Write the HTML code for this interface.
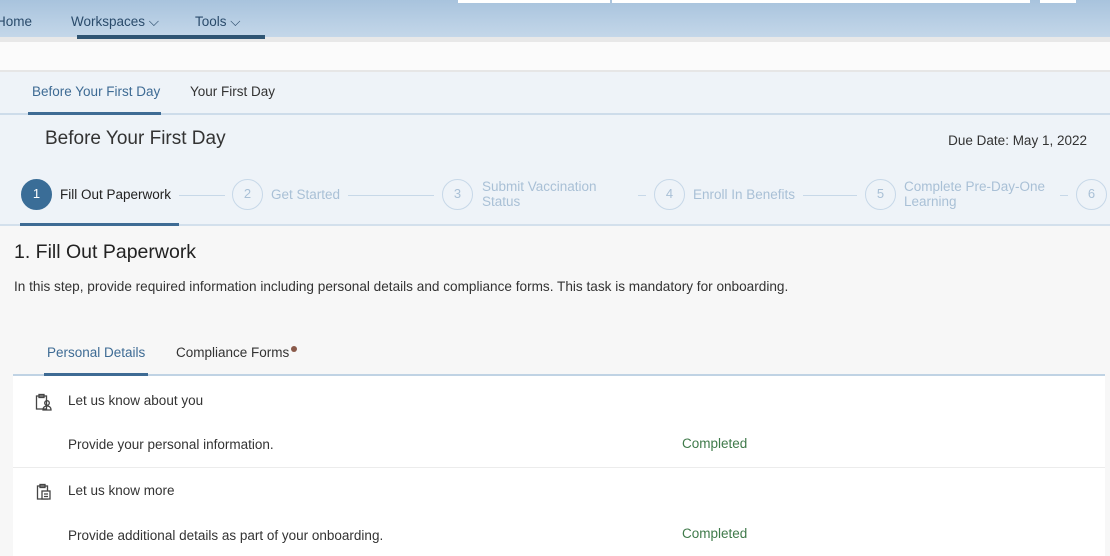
<!DOCTYPE html>
<html><head><style>
*{margin:0;padding:0;box-sizing:border-box}
body{width:1110px;height:550px;overflow:hidden;background:#f7f7f7;font-family:"Liberation Sans",sans-serif;position:relative;color:#333;font-size:13.5px}
.a{position:absolute;white-space:nowrap}
.hdr{left:0;top:0;width:1110px;height:37px;background:linear-gradient(#a8c3dd,#c4d7e9)}
.nav{top:14px;font-size:13.5px;color:#2a4b6b}
.circ{position:absolute;width:31px;height:31px;border-radius:50%;border:1.5px solid #c7d8e8;color:#a9c0d6;font-size:13px;text-align:center;line-height:28px;top:179px}
.lbl{font-size:13.5px;color:#a9c0d6}
.ln{position:absolute;height:1px;background:#c7d8e8;top:195px}
</style></head><body>
<div class="a hdr"></div>
<div class="a" style="left:458px;top:0;width:152px;height:3px;background:#fff"></div>
<div class="a" style="left:612px;top:0;width:418px;height:3px;background:#fff"></div>
<div class="a" style="left:1040px;top:0;width:36px;height:3px;background:#fff"></div>
<div class="a nav" style="left:-4px">Home</div>
<div class="a nav" style="left:71px">Workspaces ⌵</div>
<div class="a nav" style="left:195px">Tools ⌵</div>
<div class="a" style="left:0;top:37px;width:1110px;height:5px;background:#e8e8e8"></div>
<div class="a" style="left:77px;top:35px;width:188px;height:4px;background:#2f5573"></div>
<div class="a" style="left:0;top:42px;width:1110px;height:28px;background:#fbfbfb"></div>
<div class="a" style="left:0;top:70px;width:1110px;height:2px;background:#e6e6e6"></div>
<div class="a" style="left:0;top:72px;width:1110px;height:153px;background:#eef3f8"></div>
<div class="a" style="left:0;top:113px;width:1110px;height:2px;background:#cddcea"></div>
<div class="a" style="left:28px;top:112px;width:133px;height:3px;background:#3e6b94"></div>
<div class="a" style="left:32px;top:84px;color:#3e6b94">Before Your First Day</div>
<div class="a" style="left:190px;top:84px;color:#333">Your First Day</div>
<div class="a" style="left:45px;top:128px;font-size:19px;color:#333">Before Your First Day</div>
<div class="a" style="right:23px;top:133px;color:#333">Due Date: May 1, 2022</div>
<div class="circ" style="left:21px;background:#3a6d97;border-color:#3a6d97;color:#fff">1</div>
<div class="a" style="left:60px;top:187px;color:#222">Fill Out Paperwork</div>
<div class="ln" style="left:179px;width:46px"></div>
<div class="circ" style="left:232px">2</div>
<div class="a lbl" style="left:271px;top:187px">Get Started</div>
<div class="ln" style="left:348px;width:86px"></div>
<div class="circ" style="left:442px">3</div>
<div class="a lbl" style="left:482px;top:179px;line-height:15px">Submit Vaccination<br>Status</div>
<div class="ln" style="left:638px;width:8px"></div>
<div class="circ" style="left:654px">4</div>
<div class="a lbl" style="left:693px;top:187px">Enroll In Benefits</div>
<div class="ln" style="left:803px;width:54px"></div>
<div class="circ" style="left:865px">5</div>
<div class="a lbl" style="left:904px;top:179px;line-height:15px">Complete Pre-Day-One<br>Learning</div>
<div class="ln" style="left:1060px;width:8px"></div>
<div class="circ" style="left:1076px">6</div>
<div class="a" style="left:0;top:224px;width:1110px;height:2px;background:#d3e0ec"></div>
<div class="a" style="left:20px;top:223px;width:159px;height:3px;background:#3e6b94"></div>
<div class="a" style="left:14px;top:241px;font-size:19.5px;color:#222">1. Fill Out Paperwork</div>
<div class="a" style="left:14px;top:279px;font-size:13.6px;color:#333">In this step, provide required information including personal details and compliance forms. This task is mandatory for onboarding.</div>
<div class="a" style="left:47px;top:345px;color:#3e6b94">Personal Details</div>
<div class="a" style="left:176px;top:345px;color:#333">Compliance Forms</div>
<div class="a" style="left:291px;top:346px;width:6px;height:6px;border-radius:50%;background:#8a5a4a"></div>
<div class="a" style="left:13px;top:374px;width:1092px;height:2px;background:#c0d3e4"></div>
<div class="a" style="left:44px;top:373px;width:104px;height:3px;background:#3e6b94"></div>
<div class="a" style="left:13px;top:376px;width:1092px;height:180px;background:#fff"></div>
<div class="a" style="left:13px;top:467px;width:1092px;height:1px;background:#ececec"></div>
<svg class="a" style="left:35px;top:393px" width="18" height="18" viewBox="0 0 18 18" fill="none" stroke="#444" stroke-width="1.3"><rect x="1.5" y="3" width="10" height="13"/><rect x="4" y="1.5" width="5" height="3"/><circle cx="12" cy="10" r="2.3"/><path d="M8 17c0-3 2-4 4-4s4 1 4 4z"/></svg>
<div class="a" style="left:68px;top:393px">Let us know about you</div>
<div class="a" style="left:68px;top:437px">Provide your personal information.</div>
<div class="a" style="left:682px;top:436px;color:#3f7a4a">Completed</div>
<svg class="a" style="left:36px;top:483px" width="16" height="18" viewBox="0 0 16 18" fill="none" stroke="#444" stroke-width="1.3"><rect x="1.5" y="3" width="10" height="13"/><rect x="4" y="1.5" width="5" height="3"/><rect x="6" y="8" width="8" height="8" fill="#fff"/><path d="M8 11h4M8 13.5h4"/></svg>
<div class="a" style="left:68px;top:483px">Let us know more</div>
<div class="a" style="left:68px;top:528px">Provide additional details as part of your onboarding.</div>
<div class="a" style="left:682px;top:526px;color:#3f7a4a">Completed</div>
</body></html>
